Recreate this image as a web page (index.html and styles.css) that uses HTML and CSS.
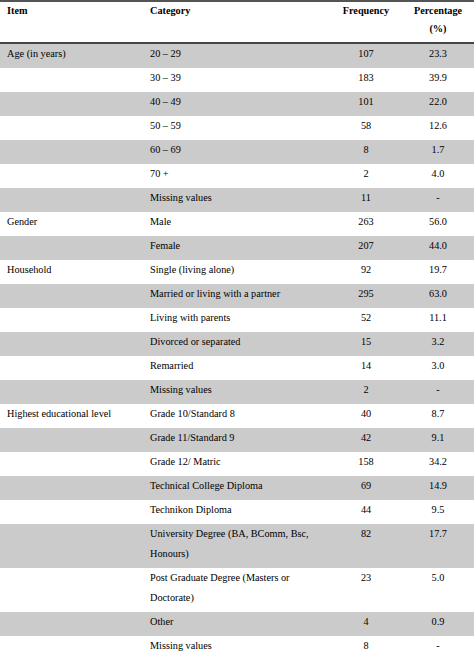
FILE: index.html
```html
<!DOCTYPE html>
<html>
<head>
<meta charset="utf-8">
<link rel="stylesheet" href="styles.css">
</head>
<body>
<table class="data">
  <colgroup>
    <col class="c-item">
    <col class="c-cat">
    <col class="c-freq">
    <col class="c-pct">
  </colgroup>
  <thead>
    <tr>
      <th class="left">Item</th>
      <th class="left">Category</th>
      <th class="mid">Frequency</th>
      <th class="mid">Percentage<br>(%)</th>
    </tr>
  </thead>
  <tbody>
    <tr><td>Age (in years)</td><td>20 – 29</td><td class="mid">107</td><td class="mid">23.3</td></tr>
    <tr><td></td><td>30 – 39</td><td class="mid">183</td><td class="mid">39.9</td></tr>
    <tr><td></td><td>40 – 49</td><td class="mid">101</td><td class="mid">22.0</td></tr>
    <tr><td></td><td>50 – 59</td><td class="mid">58</td><td class="mid">12.6</td></tr>
    <tr><td></td><td>60 – 69</td><td class="mid">8</td><td class="mid">1.7</td></tr>
    <tr><td></td><td>70 +</td><td class="mid">2</td><td class="mid">4.0</td></tr>
    <tr><td></td><td>Missing values</td><td class="mid">11</td><td class="mid">-</td></tr>
    <tr><td>Gender</td><td>Male</td><td class="mid">263</td><td class="mid">56.0</td></tr>
    <tr><td></td><td>Female</td><td class="mid">207</td><td class="mid">44.0</td></tr>
    <tr><td>Household</td><td>Single (living alone)</td><td class="mid">92</td><td class="mid">19.7</td></tr>
    <tr><td></td><td>Married or living with a partner</td><td class="mid">295</td><td class="mid">63.0</td></tr>
    <tr><td></td><td>Living with parents</td><td class="mid">52</td><td class="mid">11.1</td></tr>
    <tr><td></td><td>Divorced or separated</td><td class="mid">15</td><td class="mid">3.2</td></tr>
    <tr><td></td><td>Remarried</td><td class="mid">14</td><td class="mid">3.0</td></tr>
    <tr><td></td><td>Missing values</td><td class="mid">2</td><td class="mid">-</td></tr>
    <tr><td>Highest educational level</td><td>Grade 10/Standard 8</td><td class="mid">40</td><td class="mid">8.7</td></tr>
    <tr><td></td><td>Grade 11/Standard 9</td><td class="mid">42</td><td class="mid">9.1</td></tr>
    <tr><td></td><td>Grade 12/ Matric</td><td class="mid">158</td><td class="mid">34.2</td></tr>
    <tr><td></td><td>Technical College Diploma</td><td class="mid">69</td><td class="mid">14.9</td></tr>
    <tr><td></td><td>Technikon Diploma</td><td class="mid">44</td><td class="mid">9.5</td></tr>
    <tr><td></td><td>University Degree (BA, BComm, Bsc, Honours)</td><td class="mid">82</td><td class="mid">17.7</td></tr>
    <tr><td></td><td>Post Graduate Degree (Masters or Doctorate)</td><td class="mid">23</td><td class="mid">5.0</td></tr>
    <tr><td></td><td>Other</td><td class="mid">4</td><td class="mid">0.9</td></tr>
    <tr><td></td><td>Missing values</td><td class="mid">8</td><td class="mid">-</td></tr>
  </tbody>
</table>
</body>
</html>
```

FILE: styles.css
```css
html, body {
  margin: 0;
  padding: 0;
  background: #ffffff;
}

body {
  font-family: "Liberation Serif", "Times New Roman", serif;
  font-size: 10.25px;
  color: #000000;
}

.data {
  width: 474px;
  table-layout: fixed;
  border-collapse: separate;
  border-spacing: 0;
}

.c-item { width: 143px; }
.c-cat  { width: 187px; }
.c-freq { width: 72px; }
.c-pct  { width: 72px; }

.data th {
  font-weight: bold;
  line-height: 18px;
  padding: 0 7px 4px 7px;
  vertical-align: top;
  border-top: 2px solid #545454;
  border-bottom: 2px solid #474747;
}

.data td {
  line-height: 20px;
  padding: 0 7px 4px 7px;
  vertical-align: top;
}

.data tbody tr:nth-child(odd) td {
  background: #cbcbcb;
}

.left { text-align: left; }
.mid  { text-align: center; }
```
